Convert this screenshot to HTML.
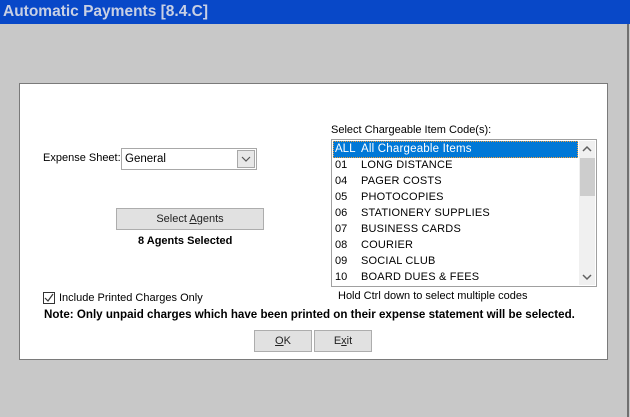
<!DOCTYPE html>
<html><head><style>
*{margin:0;padding:0;box-sizing:border-box}
body{width:630px;height:417px;background:#c8c8c8;position:relative;overflow:hidden;font-family:"Liberation Sans",Arial,sans-serif;font-size:11px;color:#000}
.a{position:absolute}
#title{left:0;top:0;width:630px;height:24px;background:#0848c8;color:#c8d0e4;font-weight:bold;font-size:15.5px;line-height:24px;padding-left:3px}
#edge{left:627px;top:24px;width:2px;height:393px;background:#707070}
#panel{left:19px;top:83px;width:589px;height:277px;background:#fff;border:1px solid #7a7a7a}
.btn{position:absolute;background:#e1e1e1;border:1px solid #adadad;text-align:center;font-size:11px;color:#222}
#list{left:331px;top:139px;width:266px;height:148px;border:1px solid #a0a0a0;background:#fff}
.row{position:absolute;left:3px;height:16px;line-height:16px;font-size:11px;white-space:pre}
.row span{position:absolute;left:0}
.row b{font-weight:normal;position:absolute;left:26px;white-space:nowrap;letter-spacing:0.2px}
</style></head><body>
<div class="a" id="title">Automatic Payments [8.4.C]</div>
<div class="a" id="edge"></div>
<div class="a" id="panel"></div>
<div class="a" style="left:43px;top:152px">Expense Sheet:</div>
<div class="a" style="left:121px;top:148px;width:136px;height:22px;border:1px solid #a8a8a8;background:#fff;padding:4px 3px;font-size:11.5px">General</div>
<div class="a" style="left:237px;top:150px;width:18px;height:18px;border:1px solid #a8a8a8;background:#e8e8e8"><svg width="16" height="16"><path d="M4 6 L8 10 L12 6" stroke="#555" fill="none" stroke-width="1.2"/></svg></div>
<div class="btn" style="left:116px;top:208px;width:148px;height:22px;line-height:20px">Select <u>A</u>gents</div>
<div class="a" style="left:138px;top:235px;font-weight:bold;font-size:11px">8 Agents Selected</div>
<div class="a" style="left:331px;top:124px">Select Chargeable Item Code(s):</div>
<div class="a" id="list">
<div class="a" style="left:1px;top:1px;width:245px;height:17px;background:#0078d7;border:1px dotted #f0a040"></div>
<div class="row" style="top:1px;color:#fff;font-size:11.5px"><span>ALL</span><b>All Chargeable Items</b></div>
<div class="row" style="top:17px"><span>01</span><b>LONG DISTANCE</b></div>
<div class="row" style="top:33px"><span>04</span><b>PAGER COSTS</b></div>
<div class="row" style="top:49px"><span>05</span><b>PHOTOCOPIES</b></div>
<div class="row" style="top:65px"><span>06</span><b>STATIONERY SUPPLIES</b></div>
<div class="row" style="top:81px"><span>07</span><b>BUSINESS CARDS</b></div>
<div class="row" style="top:97px"><span>08</span><b>COURIER</b></div>
<div class="row" style="top:113px"><span>09</span><b>SOCIAL CLUB</b></div>
<div class="row" style="top:129px"><span>10</span><b>BOARD DUES &amp; FEES</b></div>
<div class="a" style="left:247px;top:1px;width:16px;height:144px;background:#f0f0f0"></div>
<div class="a" style="left:248px;top:18px;width:15px;height:38px;background:#cdcdcd"></div>
<svg class="a" style="left:247px;top:3px" width="16" height="12"><path d="M4 8 L8 4 L12 8" stroke="#606060" fill="none" stroke-width="1.5"/></svg>
<svg class="a" style="left:247px;top:131px" width="16" height="12"><path d="M4 4 L8 8 L12 4" stroke="#606060" fill="none" stroke-width="1.5"/></svg>
</div>
<div class="a" style="left:338px;top:290px">Hold Ctrl down to select multiple codes</div>
<div class="a" style="left:43px;top:292px;width:12px;height:12px;border:1px solid #333;background:#fff"><svg width="10" height="10" style="position:absolute;left:0;top:0"><path d="M1 5 L4 8 L9 1" stroke="#333" fill="none" stroke-width="1.2"/></svg></div>
<div class="a" style="left:59px;top:292px">Include Printed Charges Only</div>
<div class="a" style="left:44px;top:308px;font-weight:bold;font-size:11.6px;white-space:nowrap">Note: Only unpaid charges which have been printed on their expense statement will be selected.</div>
<div class="btn" style="left:254px;top:330px;width:58px;height:22px;line-height:20px"><u>O</u>K</div>
<div class="btn" style="left:314px;top:330px;width:58px;height:22px;line-height:20px">E<u>x</u>it</div>
</body></html>
